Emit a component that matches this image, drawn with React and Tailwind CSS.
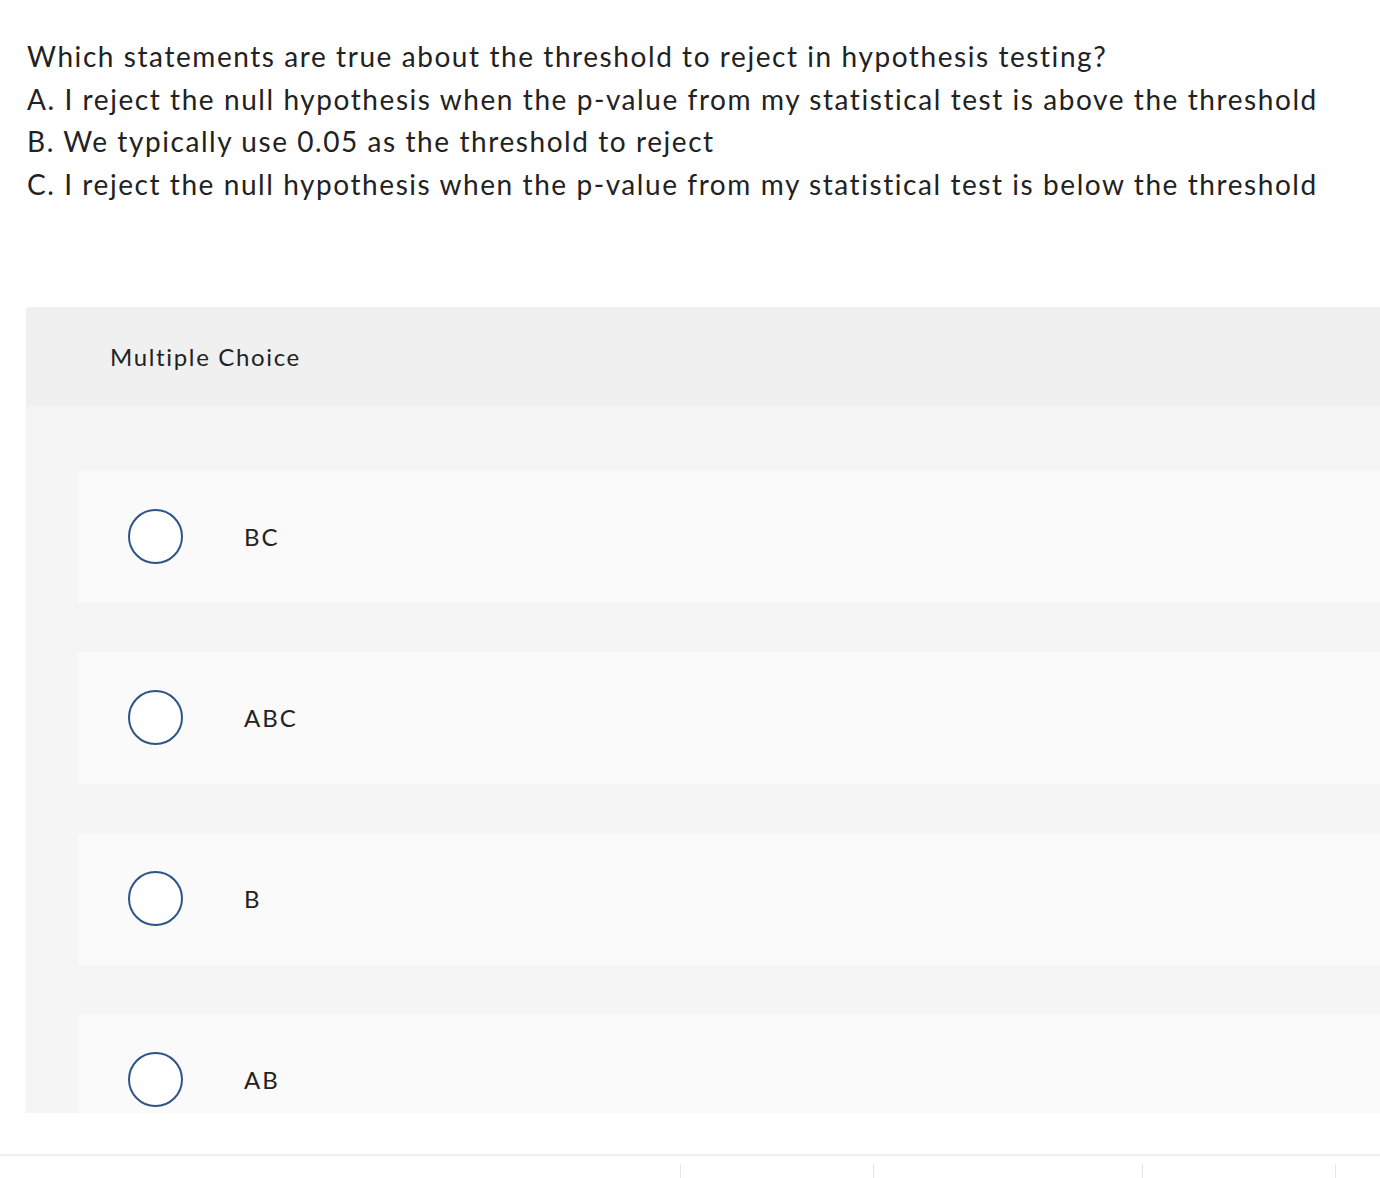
const options = ['BC', 'ABC', 'B', 'AB'];

export default function App() {
  return (
    <div className="w-[1380px] h-[1178px] overflow-hidden bg-white text-[#222]" style={{ fontFamily: 'Lato, "Noto Sans", sans-serif' }}>
      <div className="pl-[27px] pt-[35px] text-[28px] leading-[42.7px] tracking-[1.57px] whitespace-nowrap">
        <p>Which statements are true about the threshold to reject in hypothesis testing?</p>
        <p>A. I reject the null hypothesis when the p-value from my statistical test is above the threshold</p>
        <p>B. We typically use 0.05 as the threshold to reject</p>
        <p>C. I reject the null hypothesis when the p-value from my statistical test is below the threshold</p>
      </div>

      <div className="ml-[26px] mt-[101px] w-[1400px] h-[806px] rounded-tl-[4px] overflow-hidden bg-[#f5f5f5]">
        <div className="h-[100px] bg-[#f0f0f0] flex items-center pl-[84px] text-[24px] tracking-[1.65px]">
          Multiple Choice
        </div>
        <div className="pt-[64px] pl-[52px] flex flex-col gap-[49px]">
          {options.map((o) => (
            <div key={o} className="h-[132px] bg-[#fafafa] rounded-l-[4px] flex items-center">
              <span className="ml-[50px] w-[55px] h-[55px] rounded-full border-2 border-[#2d5486] bg-white shrink-0" />
              <span className="ml-[61px] text-[24px] tracking-[2px]">{o}</span>
            </div>
          ))}
        </div>
      </div>

      <div className="mt-[41px] border-t-2 border-[#f0f0f0] flex items-end h-[24px] pl-[680px]">
        <span className="h-[14px] border-l border-[#e5e5e5]" />
        <span className="ml-[192px] h-[14px] border-l border-[#e5e5e5]" />
        <span className="ml-[268px] h-[14px] border-l border-[#e5e5e5]" />
        <span className="ml-[192px] h-[14px] border-l border-[#e5e5e5]" />
      </div>
    </div>
  );
}
